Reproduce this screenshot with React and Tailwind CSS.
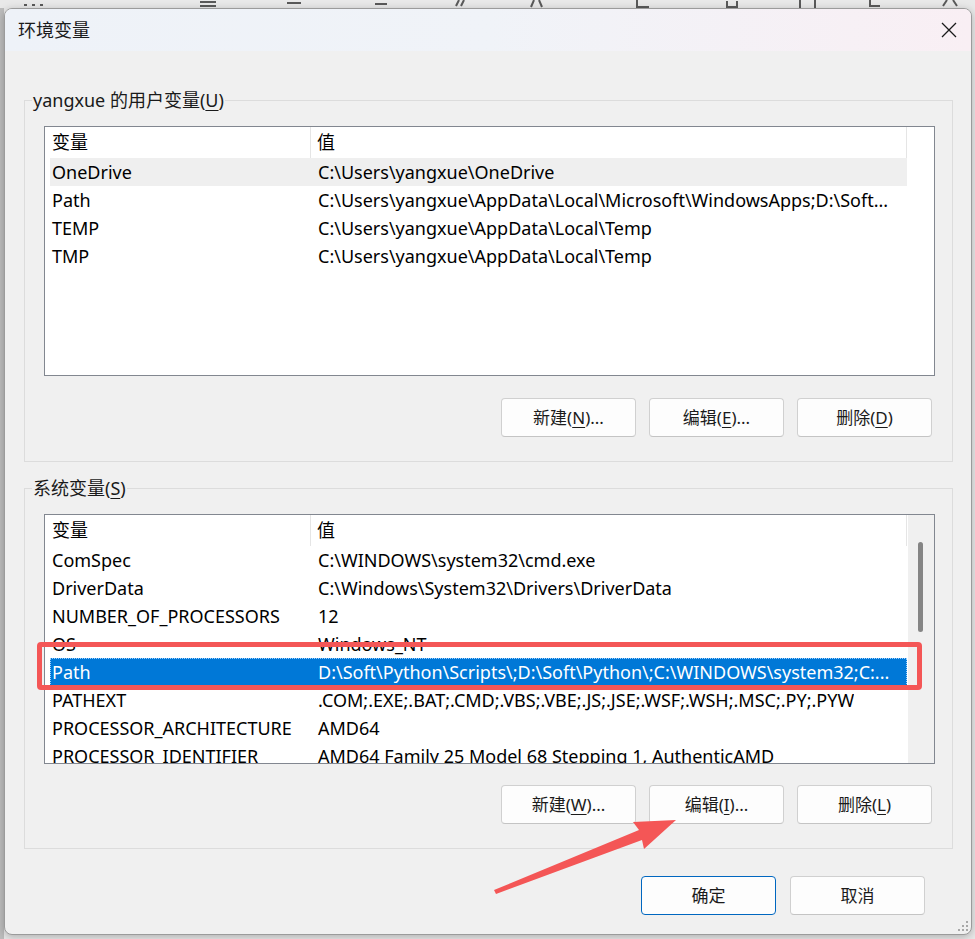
import React from 'react'

// 环境变量 dialog (Windows 11)
const userVars = [
  ['OneDrive', 'C:\\Users\\yangxue\\OneDrive'],
  ['Path', 'C:\\Users\\yangxue\\AppData\\Local\\Microsoft\\WindowsApps;D:\\Soft...'],
  ['TEMP', 'C:\\Users\\yangxue\\AppData\\Local\\Temp'],
  ['TMP', 'C:\\Users\\yangxue\\AppData\\Local\\Temp'],
]

const sysVars = [
  ['ComSpec', 'C:\\WINDOWS\\system32\\cmd.exe'],
  ['DriverData', 'C:\\Windows\\System32\\Drivers\\DriverData'],
  ['NUMBER_OF_PROCESSORS', '12'],
  ['OS', 'Windows_NT'],
  ['Path', 'D:\\Soft\\Python\\Scripts\\;D:\\Soft\\Python\\;C:\\WINDOWS\\system32;C:...'],
  ['PATHEXT', '.COM;.EXE;.BAT;.CMD;.VBS;.VBE;.JS;.JSE;.WSF;.WSH;.MSC;.PY;.PYW'],
  ['PROCESSOR_ARCHITECTURE', 'AMD64'],
  ['PROCESSOR_IDENTIFIER', 'AMD64 Family 25 Model 68 Stepping 1, AuthenticAMD'],
]

function Btn({ children, primary }) {
  return (
    <button
      className={
        'w-[135px] h-[39px] rounded-[4px] bg-[#fdfdfd] text-[17px] text-[#1b1b1b] flex items-center justify-center ' +
        (primary ? 'border border-[#0067c0]' : 'border border-[#d0d0d0] border-b-[#c4c4c4]')
      }
    >
      {children}
    </button>
  )
}

function Key({ k }) {
  return <span className="underline underline-offset-[3px] decoration-1">{k}</span>
}

function VarList({ rows, hovered, selected, scroll }) {
  return (
    <div className="relative w-[891px] h-[250px] bg-white border border-[#828790] overflow-hidden flex">
      <div className="w-[863px] pl-[5px]">
        <div className="h-[31px] flex items-center text-[18px]">
          <div className="w-[261px] h-full pl-[2px] flex items-center border-r border-[#e5e5e5]">变量</div>
          <div className="w-[596px] h-full pl-[6px] flex items-center border-r border-[#e5e5e5]">值</div>
        </div>
        {rows.map(([name, val], i) => (
          <div
            key={name + i}
            className={
              'h-[28px] w-[857px] flex items-center text-[18px] whitespace-nowrap ' +
              (i === selected
                ? 'bg-[#0078d7] text-white outline-1 outline-dotted outline-offset-[-1px] outline-[#9fd0ff]'
                : i === hovered
                ? 'bg-[#efefef]'
                : '')
            }
          >
            <div className="w-[261px] pl-[2px] overflow-hidden">{name}</div>
            <div className="pl-[7px] overflow-hidden">{val}</div>
          </div>
        ))}
      </div>
      {scroll && (
        <div className="w-[26px] h-full bg-[#f0f0f0] pl-[10px] pt-[27px]">
          <div className="w-[5px] h-[90px] rounded-full bg-[#858585]" />
        </div>
      )}
    </div>
  )
}

export default function App() {
  return (
    <div className="relative w-[975px] h-[939px] overflow-hidden bg-[#e9e9e9] font-['Noto_Sans','Noto_Sans_CJK_SC',sans-serif] text-black">
      {/* window behind */}
      <div className="absolute left-0 top-0 w-[975px] h-[8px] flex">
        <svg width="975" height="8" viewBox="0 0 975 8" className="text-[#5a5a5a]">
          <g fill="none" stroke="currentColor" strokeWidth="2">
            <path d="M24 5h3M32 5h3M40 5h3" />
            <path d="M200 2h16M200 6h16" />
            <path d="M287 3h14" />
            <path d="M375 4h12" />
            <path d="M456 6l3-6M461 6l3-6" />
            <path d="M534 0l-3 7M539 0l3 7" />
            <path d="M637 0v7h12" />
            <path d="M727 1v7M727 7h10M737 1v7" />
            <path d="M800 0v8M815 0v8" />
            <path d="M870 0v6h10" />
            <path d="M943 6l4-6M957 6l-4-6" />
          </g>
        </svg>
      </div>
      <div className="absolute left-0 top-[8px] w-[4px] h-[931px] bg-[#bdbdbd]" />

      {/* dialog */}
      <div className="absolute left-[4px] top-[8px] w-[968px] h-[927px] rounded-[8px] border border-[#9b9b9b] bg-[#f0f0f0] overflow-hidden shadow-[0_2px_8px_rgba(0,0,0,0.25)]">
        <div className="h-[42px] flex items-center justify-between pl-[13px] pr-[14px] bg-gradient-to-r from-[#eef2f8] via-[#f0f3f8] to-[#f9eff4]">
          <div className="text-[18px] text-[#1a1a1a]">环境变量</div>
          <svg width="16" height="16" viewBox="0 0 16 16">
            <path d="M1 1l14 14M15 1L1 15" stroke="#1a1a1a" strokeWidth="1.3" />
          </svg>
        </div>

        <div className="pl-[19px] pt-[37px]">
          <fieldset className="w-[929px] h-[374px] border border-[#dcdcdc] pl-[19px] pr-[17px]">
            <legend className="-ml-[12px] px-[1px] text-[18px] leading-[24px] text-[#1a1a1a]">
              yangxue 的用户变量(<Key k="U" />)
            </legend>
            <div className="mt-[14px]">
              <VarList rows={userVars} hovered={0} selected={-1} />
            </div>
            <div className="mt-[22px] flex justify-end gap-[13px] pr-[3px]">
              <Btn>新建(<Key k="N" />)...</Btn>
              <Btn>编辑(<Key k="E" />)...</Btn>
              <Btn>删除(<Key k="D" />)</Btn>
            </div>
          </fieldset>

          <fieldset className="mt-[14px] w-[929px] h-[373px] border border-[#dcdcdc] pl-[19px] pr-[17px]">
            <legend className="-ml-[12px] px-[1px] text-[18px] leading-[24px] text-[#1a1a1a]">
              系统变量(<Key k="S" />)
            </legend>
            <div className="mt-[14px]">
              <VarList rows={sysVars} selected={4} scroll />
            </div>
            <div className="mt-[21px] flex justify-end gap-[13px] pr-[3px]">
              <Btn>新建(<Key k="W" />)...</Btn>
              <Btn>编辑(<Key k="I" />)...</Btn>
              <Btn>删除(<Key k="L" />)</Btn>
            </div>
          </fieldset>

          <div className="mt-[27px] w-[901px] flex justify-end gap-[14px]">
            <Btn primary>确定</Btn>
            <Btn>取消</Btn>
          </div>
        </div>

        {/* resize grip */}
        <svg className="absolute right-[3px] bottom-[3px]" width="10" height="10" viewBox="0 0 10 10">
          <g fill="#a8a8a8">
            <rect x="8" y="0" width="2" height="2" />
            <rect x="4" y="4" width="2" height="2" />
            <rect x="8" y="4" width="2" height="2" />
            <rect x="0" y="8" width="2" height="2" />
            <rect x="4" y="8" width="2" height="2" />
            <rect x="8" y="8" width="2" height="2" />
          </g>
        </svg>
      </div>

      {/* annotations */}
      <div className="absolute left-[37px] top-[642px] w-[885px] h-[48px] border-[5px] border-[#f45656] rounded-[4px]" />
      <svg className="absolute left-0 top-0 pointer-events-none" width="975" height="939" viewBox="0 0 975 939">
        <polygon
          points="494,890 639,830 633,822 676,820 644,849 642,840 496,894"
          fill="#f45656"
        />
      </svg>
    </div>
  )
}
